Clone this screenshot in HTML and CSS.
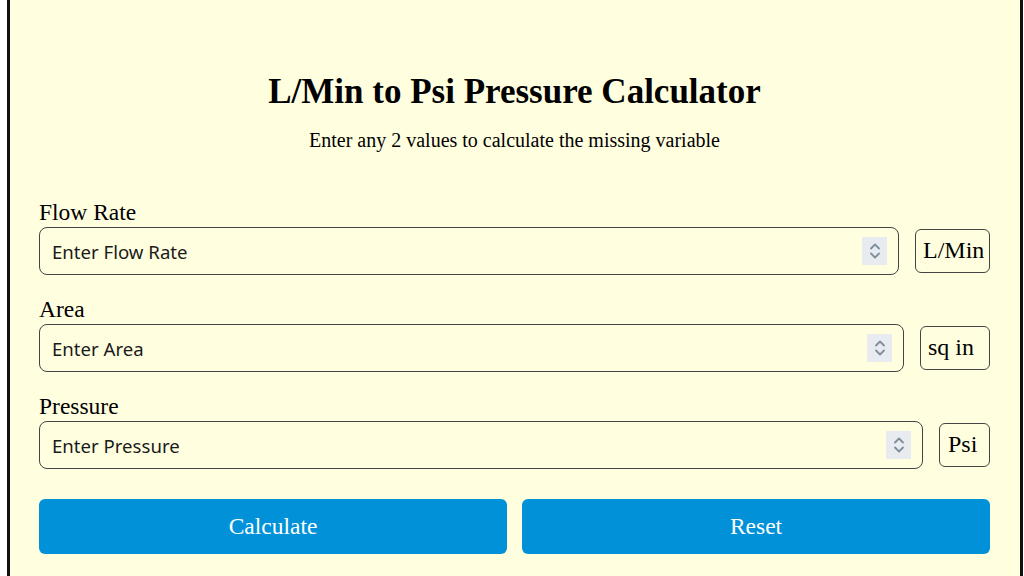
FILE: index.html
```html
<!DOCTYPE html>
<html lang="en">

<head>
  <meta charset="utf-8">
  <title>L/Min to Psi Pressure Calculator</title>
  <link rel="stylesheet" href="styles.css">
</head>

<body>
  <!-- Calculator Start -->
  <div class="calc-container">
    <h1 class="calc-title">L/Min to Psi Pressure Calculator</h1>
    <p class="calc-subtitle">Enter any 2 values to calculate the missing variable</p>

    <div class="calc-field">
      <label for="flowRate">Flow Rate</label>
      <div class="field-row">
        <div class="input-wrap">
          <input type="number" id="flowRate" placeholder="Enter Flow Rate">
          <span class="spinner" aria-hidden="true">
            <svg width="12" height="18" viewBox="0 0 12 18"><path d="M2 6.5 6 2.5 10 6.5M2 11.5 6 15.5 10 11.5" fill="none" stroke="#7f8e9d" stroke-width="1.8" stroke-linecap="round" stroke-linejoin="round"/></svg>
          </span>
        </div>
        <span class="unit unit-flow">L/Min</span>
      </div>
    </div>

    <div class="calc-field">
      <label for="area">Area</label>
      <div class="field-row">
        <div class="input-wrap">
          <input type="number" id="area" placeholder="Enter Area">
          <span class="spinner" aria-hidden="true">
            <svg width="12" height="18" viewBox="0 0 12 18"><path d="M2 6.5 6 2.5 10 6.5M2 11.5 6 15.5 10 11.5" fill="none" stroke="#7f8e9d" stroke-width="1.8" stroke-linecap="round" stroke-linejoin="round"/></svg>
          </span>
        </div>
        <span class="unit unit-area">sq in</span>
      </div>
    </div>

    <div class="calc-field">
      <label for="pressure">Pressure</label>
      <div class="field-row">
        <div class="input-wrap">
          <input type="number" id="pressure" placeholder="Enter Pressure">
          <span class="spinner" aria-hidden="true">
            <svg width="12" height="18" viewBox="0 0 12 18"><path d="M2 6.5 6 2.5 10 6.5M2 11.5 6 15.5 10 11.5" fill="none" stroke="#7f8e9d" stroke-width="1.8" stroke-linecap="round" stroke-linejoin="round"/></svg>
          </span>
        </div>
        <span class="unit unit-pressure">Psi</span>
      </div>
    </div>

    <!-- Buttons -->
    <div class="calc-buttons">
      <button class="calc-btn" type="button">Calculate</button>
      <button class="calc-btn" type="button">Reset</button>
    </div>
  </div>
  <!-- Calculator End -->
</body>

</html>
```

FILE: styles.css
```css
/* Page */
body {
  margin: 0;
  background-color: #fff;
  font-family: "Liberation Serif", "Times New Roman", serif;
  color: #000;
}

.calc-container {
  margin: 0 1px 0 7px;
  padding: 72px 30px 40px 29px;
  min-height: 600px;
  background-color: #ffffe0;
  border: 3px solid #111;
  border-top: none;
}

/* Title styling */
.calc-title {
  margin: 0;
  font-size: 35px;
  font-weight: bold;
  text-align: center;
}

.calc-subtitle {
  margin: 17px 0 47px;
  font-size: 20px;
  text-align: center;
}

/* Fields */
.calc-field {
  margin-bottom: 21px;
}

.calc-field label {
  display: block;
  font-size: 23.5px;
  margin-bottom: 1px;
}

.field-row {
  display: flex;
  align-items: center;
  gap: 16px;
}

.input-wrap {
  position: relative;
  flex: 1;
}

.input-wrap input {
  display: block;
  box-sizing: border-box;
  width: 100%;
  height: 48px;
  padding: 0 50px 0 12px;
  font-family: "Noto Sans", "DejaVu Sans", sans-serif;
  font-size: 18.6px;
  color: #222;
  background-color: #ffffe0;
  border: 1px solid #444;
  border-radius: 8px;
  outline: none;
}

.input-wrap input::placeholder {
  color: #1a1a1a;
}

.input-wrap input::-webkit-inner-spin-button,
.input-wrap input::-webkit-outer-spin-button {
  -webkit-appearance: none;
  margin: 0;
}

.spinner {
  position: absolute;
  top: 10px;
  right: 12px;
  width: 25px;
  height: 28px;
  display: flex;
  align-items: center;
  justify-content: center;
  background-color: #e8ebef;
}

/* Unit boxes */
.unit {
  box-sizing: border-box;
  height: 44px;
  padding: 0 0 0 7px;
  line-height: 41px;
  font-size: 24px;
  white-space: nowrap;
  border: 1px solid #444;
  border-radius: 6px;
  background-color: #ffffe0;
}

.unit-flow {
  width: 75px;
}

.unit-area {
  width: 70px;
}

.unit-pressure {
  width: 51px;
  padding-left: 8px;
}

/* Buttons */
.calc-buttons {
  display: flex;
  gap: 15px;
  margin-top: 30px;
}

.calc-btn {
  flex: 1;
  height: 55px;
  font-family: "Liberation Serif", "Times New Roman", serif;
  font-size: 23.5px;
  color: #fff;
  background-color: #0091d9;
  border: none;
  border-radius: 6px;
  cursor: pointer;
}

.calc-btn:hover {
  background-color: #007bb9;
}
```
